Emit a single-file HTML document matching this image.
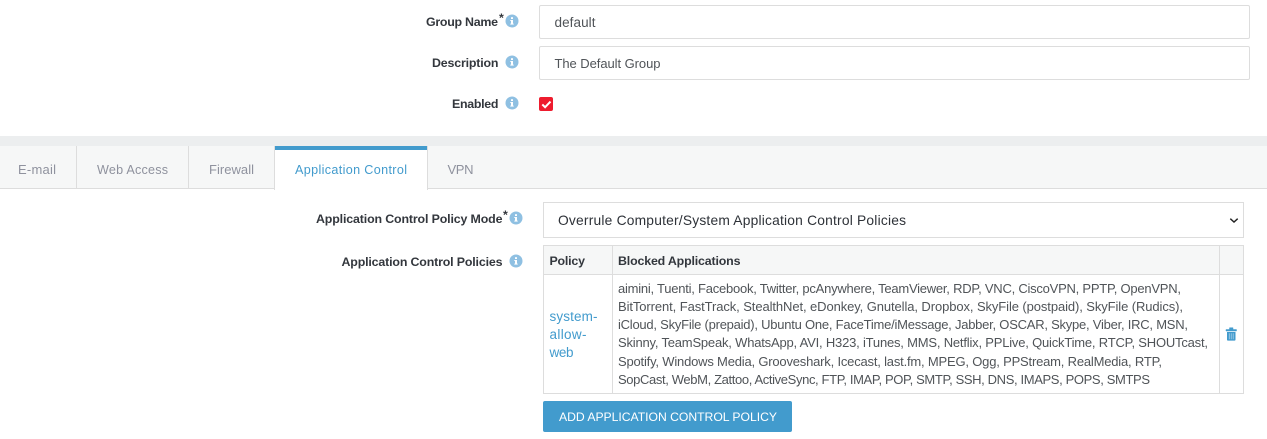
<!DOCTYPE html>
<html><head><meta charset="utf-8"><style>
html,body{margin:0;padding:0;background:#fff}
body{width:1267px;height:439px;overflow:hidden;position:relative}
.a{position:absolute;box-sizing:border-box}
svg{position:absolute;left:0;top:0}
text{font-family:"Liberation Sans",Arial,sans-serif;font-size:13px}
.l{font-weight:700;fill:#33373d;font-size:12.4px}
.t{fill:#8f929e}
.c{fill:#505458}
.v{font-size:13.500px}
</style></head><body>
<div class="a" style="left:539px;top:5px;width:711px;height:34px;border:1px solid #ddd;border-radius:2px"></div>
<div class="a" style="left:539px;top:46px;width:711px;height:34px;border:1px solid #ddd;border-radius:2px"></div>
<div class="a" style="left:0;top:136px;width:1267px;height:10px;background:#eceeef"></div>
<div class="a" style="left:0;top:146px;width:1267px;height:43px;background:#f6f7f7;border-bottom:1px solid #ddd"></div>
<div class="a" style="left:76px;top:146px;width:1px;height:42px;background:#ddd"></div>
<div class="a" style="left:188px;top:146px;width:1px;height:42px;background:#ddd"></div>
<div class="a" style="left:274px;top:146px;width:154px;height:44px;background:#fff;border-left:1px solid #ddd;border-right:1px solid #ddd"></div>
<div class="a" style="left:275px;top:146px;width:152px;height:4px;background:#429bcd"></div>
<div class="a" style="left:543px;top:202px;width:701px;height:36px;border:1px solid #ddd;background:#fff"></div>
<div class="a" style="left:543px;top:245px;width:701px;height:149px;border:1px solid #ddd"></div>
<div class="a" style="left:544px;top:246px;width:699px;height:29px;background:#f6f7f7;border-bottom:1px solid #ddd"></div>
<div class="a" style="left:612px;top:246px;width:1px;height:147px;background:#ddd"></div>
<div class="a" style="left:1219px;top:246px;width:1px;height:147px;background:#ddd"></div>
<div class="a" style="left:543px;top:401px;width:249px;height:31px;background:#429bcd;border-radius:2px"></div>
<div class="a" style="left:539px;top:97px;width:14px;height:14px;background:#ee1c2e;border-radius:2px"></div>
<svg width="1267" height="439" viewBox="0 0 1267 439">
<defs>
<g id="i"><circle r="6.500" fill="#8fc0e2"/><rect x="-1" y="-1" width="2" height="4.400" fill="#fff"/><rect x="-1.700" y="-1" width="1.600" height="1" fill="#fff"/><rect x="-1.700" y="2.600" width="3.400" height="1" fill="#fff"/><rect x="-1" y="-3.800" width="2" height="1.800" fill="#fff"/></g>
</defs>
<text class="l" x="426" y="26" textLength="72" lengthAdjust="spacing">Group Name</text>
<text class="l" x="499" y="22">*</text>
<use href="#i" x="512" y="21"/>
<text class="l" x="432" y="67" textLength="66.500" lengthAdjust="spacing">Description</text>
<use href="#i" x="512" y="62"/>
<text class="l" x="452" y="108" textLength="46.500" lengthAdjust="spacing">Enabled</text>
<use href="#i" x="512" y="103"/>
<text class="c v" x="554.500" y="27" textLength="41" lengthAdjust="spacing">default</text>
<text class="c" x="554.500" y="68" textLength="106" lengthAdjust="spacing">The Default Group</text>
<path d="M542.300 104.400l2.800 2.800 5.400-5.600" fill="none" stroke="#fff" stroke-width="2"/>
<text class="t" x="18" y="174" textLength="38" lengthAdjust="spacing">E-mail</text>
<text class="t" style="font-size:12.600px" x="97" y="174" textLength="71" lengthAdjust="spacing">Web Access</text>
<text class="t" x="209" y="174" textLength="45" lengthAdjust="spacing">Firewall</text>
<text x="295" y="174" fill="#429bcd" style="font-size:12.600px" textLength="112" lengthAdjust="spacing">Application Control</text>
<text class="t" x="447.500" y="174" textLength="26" lengthAdjust="spacing">VPN</text>
<text class="l" x="316" y="223" textLength="186.500" lengthAdjust="spacing">Application Control Policy Mode</text>
<text class="l" x="503" y="219">*</text>
<use href="#i" x="516" y="218"/>
<text class="l" x="341.500" y="266" textLength="161" lengthAdjust="spacing">Application Control Policies</text>
<use href="#i" x="516" y="261"/>
<text x="558" y="225" fill="#2e3238" style="font-size:13.800px" textLength="348" lengthAdjust="spacing">Overrule Computer/System Application Control Policies</text>
<path d="M1230.300 218.700l3.700 3.300 3.700-3.300" fill="none" stroke="#222" stroke-width="1.400"/>
<text class="l" x="549.500" y="265" textLength="35.500" lengthAdjust="spacing">Policy</text>
<text class="l" x="618" y="265" textLength="122.500" lengthAdjust="spacing">Blocked Applications</text>
<text class="v" x="549.500" y="321" fill="#429bcd" textLength="48" lengthAdjust="spacing">system-</text>
<text class="v" x="549.500" y="339" fill="#429bcd" textLength="37" lengthAdjust="spacing">allow-</text>
<text class="v" x="549.500" y="357" fill="#429bcd" textLength="24" lengthAdjust="spacing">web</text>
<text class="c" x="618" y="293" textLength="563" lengthAdjust="spacing">aimini, Tuenti, Facebook, Twitter, pcAnywhere, TeamViewer, RDP, VNC, CiscoVPN, PPTP, OpenVPN,</text>
<text class="c" x="618" y="311" textLength="565" lengthAdjust="spacing">BitTorrent, FastTrack, StealthNet, eDonkey, Gnutella, Dropbox, SkyFile (postpaid), SkyFile (Rudics),</text>
<text class="c" x="618" y="329" textLength="570" lengthAdjust="spacing">iCloud, SkyFile (prepaid), Ubuntu One, FaceTime/iMessage, Jabber, OSCAR, Skype, Viber, IRC, MSN,</text>
<text class="c" x="618" y="347" textLength="590" lengthAdjust="spacing">Skinny, TeamSpeak, WhatsApp, AVI, H323, iTunes, MMS, Netflix, PPLive, QuickTime, RTCP, SHOUTcast,</text>
<text class="c" x="618" y="366" textLength="544" lengthAdjust="spacing">Spotify, Windows Media, Grooveshark, Icecast, last.fm, MPEG, Ogg, PPStream, RealMedia, RTP,</text>
<text class="c" x="618" y="384" textLength="532" lengthAdjust="spacing">SopCast, WebM, Zattoo, ActiveSync, FTP, IMAP, POP, SMTP, SSH, DNS, IMAPS, POPS, SMTPS</text>
<path d="M1226 329.500h10.500v1.500h-10.500zM1229.500 329.500v-1.800h3.500v1.800" fill="#429bcd" stroke="#429bcd" stroke-width=".5"/>
<path d="M1227 332h8.500v7.800a.8.800 0 0 1-.8.800h-6.900a.8.800 0 0 1-.8-.8z" fill="#429bcd"/>
<path d="M1229.300 333.200v6M1231.250 333.200v6M1233.200 333.200v6" stroke="#a9d0e8" stroke-width=".8"/>
<text x="559" y="421" fill="#fff" style="font-size:12.200px" textLength="218" lengthAdjust="spacing">ADD APPLICATION CONTROL POLICY</text>
</svg>
</body></html>
